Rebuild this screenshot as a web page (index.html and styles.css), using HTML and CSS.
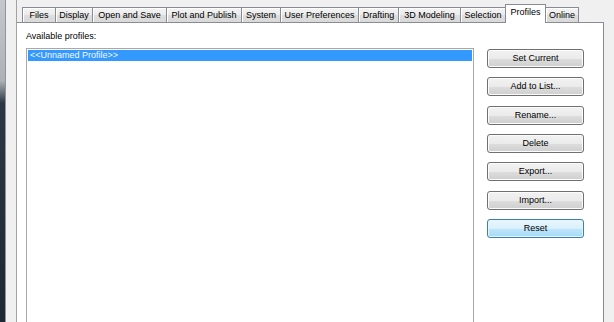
FILE: index.html
```html
<!DOCTYPE html>
<html>
<head>
<meta charset="utf-8">
<link rel="stylesheet" href="styles.css">
</head>
<body>
<div class="frame">
  <div class="edge"></div>
  <div class="main">
    <div class="tabs">
      <div class="tab t-files">Files</div>
      <div class="tab t-display">Display</div>
      <div class="tab t-open">Open and Save</div>
      <div class="tab t-plot">Plot and Publish</div>
      <div class="tab t-system">System</div>
      <div class="tab t-user">User Preferences</div>
      <div class="tab t-drafting">Drafting</div>
      <div class="tab t-3d">3D Modeling</div>
      <div class="tab t-selection">Selection</div>
      <div class="tab t-profiles active">Profiles</div>
      <div class="tab t-online">Online</div>
    </div>
    <div class="panel">
      <div class="left">
        <div class="label">Available profiles:</div>
        <div class="listbox">
          <div class="item selected">&lt;&lt;Unnamed Profile&gt;&gt;</div>
        </div>
      </div>
      <div class="buttons">
        <div class="btn">Set Current</div>
        <div class="btn">Add to List...</div>
        <div class="btn">Rename...</div>
        <div class="btn">Delete</div>
        <div class="btn">Export...</div>
        <div class="btn">Import...</div>
        <div class="btn default">Reset</div>
      </div>
    </div>
  </div>
</div>
</body>
</html>
```
FILE: styles.css
```css
html, body {
  margin: 0;
  padding: 0;
}
body {
  width: 614px;
  height: 322px;
  overflow: hidden;
  background: #f0f0f0;
  font-family: "Liberation Sans", Arial, sans-serif;
  font-size: 9px;
  color: #000;
}
.frame {
  display: flex;
  height: 322px;
  overflow: hidden;
}
.edge {
  width: 5px;
  flex: none;
  background: linear-gradient(#c4c7cb 0, #aeb2b7 25%, #2c3745 32%, #1e2834 100%);
  border-right: 1px solid #8f949a;
  margin-right: 10px;
}
.main {
  width: 587px;
  flex: none;
  border-left: 1px solid #a3a3a3;
  display: flex;
  flex-direction: column;
  min-height: 0;
}
.tabs {
  height: 22px;
  flex: none;
  display: flex;
  align-items: flex-end;
  padding-left: 5px;
  position: relative;
  z-index: 1;
}
.tab {
  height: 14px;
  line-height: 14px;
  border: 1px solid #898c95;
  border-bottom: none;
  margin-right: -1px;
  text-align: center;
  background: linear-gradient(#f4f4f4 0, #ebebeb 50%, #dedede 51%, #d9d9d9 100%);
  box-shadow: inset 1px 1px 0 #fff;
  white-space: nowrap;
  box-sizing: content-box;
}
.t-files { width: 32px; }
.t-display { width: 36px; }
.t-open { width: 73px; }
.t-plot { width: 74px; }
.t-system { width: 38px; }
.t-user { width: 77px; }
.t-drafting { width: 39px; }
.t-3d { width: 61px; }
.t-selection { width: 44px; }
.t-profiles { width: 39px; }
.t-online { width: 32px; }
.tab.active {
  height: 18px;
  line-height: 15px;
  background: #fff;
  box-shadow: none;
  margin-bottom: -1px;
  position: relative;
  z-index: 2;
}
.panel {
  flex: 1;
  min-height: 0;
  overflow: hidden;
  background: #fff;
  border-top: 1px solid #898c95;
  border-right: 1px solid #898c95;
  display: flex;
  padding: 8px 0 0 9px;
}
.left {
  width: 448px;
  display: flex;
  flex-direction: column;
  min-height: 0;
}
.label {
  height: 11px;
  line-height: 11px;
  margin-bottom: 6px;
  flex: none;
}
.listbox {
  flex: 1;
  border: 1px solid #a5a8ad;
  border-bottom: none;
  padding: 1px;
  background: #fff;
}
.item {
  height: 11px;
  line-height: 11px;
  padding-left: 2px;
}
.item.selected {
  background: #3399ff;
  color: #f4f8ff;
}
.buttons {
  margin-left: 13px;
  margin-top: 18px;
  width: 97px;
  display: flex;
  flex-direction: column;
  gap: 9.33px;
}
.btn {
  height: 17px;
  line-height: 17px;
  text-align: center;
  border: 1px solid #707070;
  border-radius: 3px;
  background: linear-gradient(#f2f2f2 0, #ebebeb 50%, #dddddd 51%, #cfcfcf 100%);
  box-shadow: inset 0 0 0 1px #fcfcfc;
}
.btn.default {
  border-color: #3c7fb1;
  background: linear-gradient(#eaf6fd 0, #d9f0fc 50%, #bee6fd 51%, #a7d9f5 100%);
  box-shadow: inset 0 0 0 1px #e6f4fc;
}
```
